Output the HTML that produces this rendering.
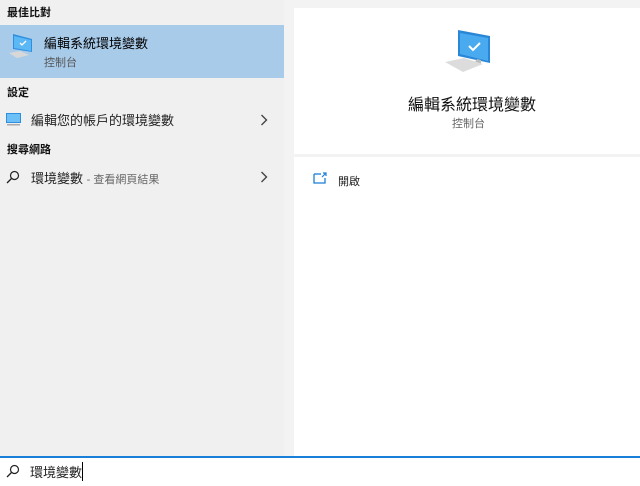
<!DOCTYPE html>
<html><head><meta charset="utf-8"><style>
*{margin:0;padding:0;box-sizing:border-box}
body{width:640px;height:486px;background:#f3f3f3;font-family:"Liberation Sans","Noto Sans CJK TC",sans-serif;position:relative;overflow:hidden;color:#000}
.left{position:absolute;left:0;top:0;width:284px;height:456px;background:#f0f0f0}
.abs{position:absolute;white-space:nowrap}
.hdr{font-size:11px;font-weight:bold;color:#111}
.hl{position:absolute;left:0;top:25px;width:284px;height:53px;background:#a9cbea}
.card1{position:absolute;left:294px;top:8px;width:346px;height:146px;background:#fff}
.card2{position:absolute;left:294px;top:157px;width:346px;height:299px;background:#fff}
.bar{position:absolute;left:0;top:456px;width:640px;height:2px;background:#1a7fd8}
.search{position:absolute;left:0;top:458px;width:640px;height:28px;background:#fff}
</style></head><body>
<div class="left"></div>
<div class="abs hdr" style="left:7px;top:4px">最佳比對</div>
<div class="hl"></div>
<svg class="abs" style="left:7px;top:30px" width="28" height="30" viewBox="0 0 28 30">
<polygon points="6,4 25,9 25,22 6,19" fill="#2e8ee0"/><polygon points="7,6 24,10 24,21 7,18" fill="#5cb8f5"/>
<path d="M13 13l2 2 4-4" stroke="#fff" stroke-width="1.3" fill="none"/>
<polygon points="2,23 13,21 22,25 10,28" fill="#d8d8d8"/></svg>
<div class="abs" style="left:44px;top:33px;font-size:13px">編輯系統環境變數</div>
<div class="abs" style="left:44px;top:54px;font-size:11px;color:#555">控制台</div>
<div class="abs hdr" style="left:7px;top:84px">設定</div>
<svg class="abs" style="left:6px;top:112px" width="16" height="14"><rect x="0" y="1" width="15" height="10" fill="#2e8ee0"/><rect x="1" y="2" width="13" height="8" fill="#6cc0f5"/><rect x="1" y="12" width="13" height="1.5" fill="#aaa"/></svg>
<div class="abs" style="left:31px;top:110px;font-size:13px;color:#222">編輯您的帳戶的環境變數</div>
<svg class="abs" style="left:260px;top:114px" width="8" height="12"><path d="M1.5 1l5 5-5 5" stroke="#444" stroke-width="1.4" fill="none"/></svg>
<div class="abs hdr" style="left:7px;top:141px">搜尋網路</div>
<svg class="abs" style="left:6px;top:170px" width="14" height="14"><circle cx="8.5" cy="5.5" r="4" stroke="#222" stroke-width="1.2" fill="none"/><path d="M5.5 8.5L1 13" stroke="#222" stroke-width="1.3"/></svg>
<div class="abs" style="left:31px;top:168px;font-size:13px;color:#222">環境變數 <span style="font-size:11px;color:#666">- 查看網頁結果</span></div>
<svg class="abs" style="left:260px;top:171px" width="8" height="12"><path d="M1.5 1l5 5-5 5" stroke="#444" stroke-width="1.4" fill="none"/></svg>
<div class="card1"></div>
<div class="card2"></div>
<svg class="abs" style="left:443px;top:28px" width="62" height="48" viewBox="0 0 62 48">
<polygon points="15,2 47,8 47,35 15,28" fill="#2a86d6"/><polygon points="17,5 45,10 45,33 17,26" fill="#4aaaf0"/>
<path d="M26 18l4 4 7-7" stroke="#fff" stroke-width="2" fill="none"/>
<polygon points="34,31 38,32 38,36 30,37" fill="#bbb"/>
<polygon points="2,34 21,30 40,36 20,44" fill="#dcdcdc"/></svg>
<div class="abs" style="left:408px;top:91px;font-size:16px;color:#111">編輯系統環境變數</div>
<div class="abs" style="left:452px;top:115px;font-size:11px;color:#666">控制台</div>
<svg class="abs" style="left:313px;top:172px" width="15" height="12"><path d="M1 2v9h11V6" stroke="#1a7fd8" stroke-width="1.3" fill="none"/><path d="M1 2h7" stroke="#1a7fd8" stroke-width="1.3"/><path d="M9 5l4-4M10 1h3v3" stroke="#1a7fd8" stroke-width="1.2" fill="none"/></svg>
<div class="abs" style="left:338px;top:173px;font-size:11px;color:#222">開啟</div>
<div class="bar"></div>
<div class="search"></div>
<svg class="abs" style="left:6px;top:464px" width="14" height="14"><circle cx="8.5" cy="5.5" r="4" stroke="#222" stroke-width="1.2" fill="none"/><path d="M5.5 8.5L1 13" stroke="#222" stroke-width="1.3"/></svg>
<div class="abs" style="left:30px;top:462px;font-size:13px;color:#222">環境變數</div>
<div class="abs" style="left:82px;top:462px;width:1px;height:19px;background:#000"></div>
</body></html>
